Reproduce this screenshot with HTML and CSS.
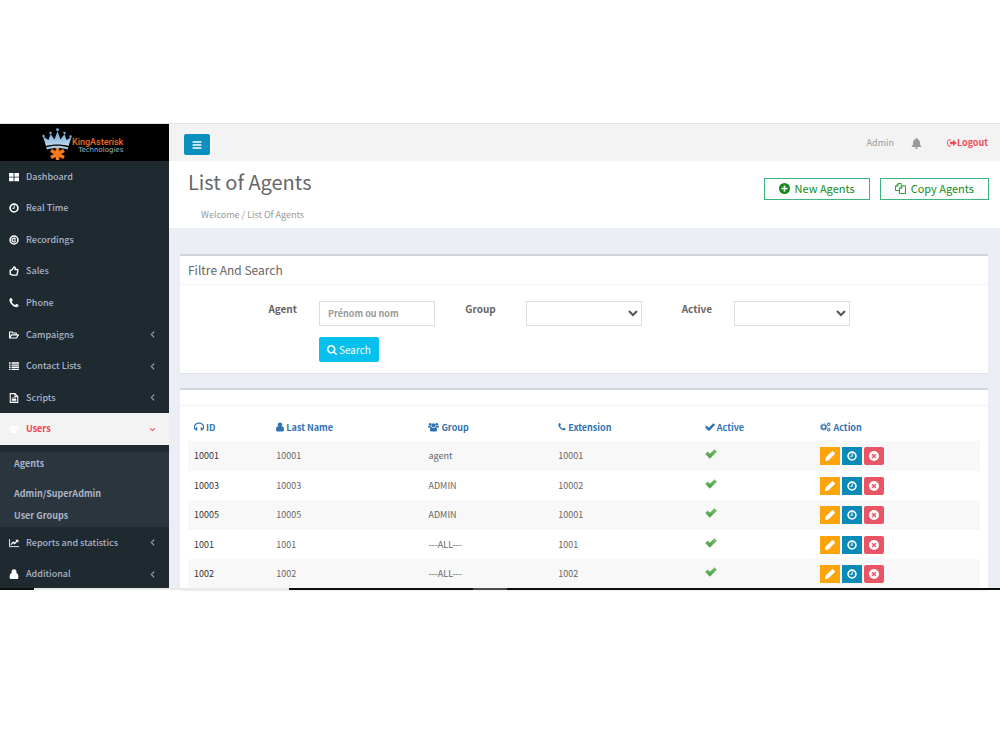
FILE: index.html
```html
<!DOCTYPE html>
<html lang="en">
<head>
  <meta charset="UTF-8" />
  <title>List of Agents</title>
  <link rel="stylesheet" href="styles.css">
</head>
<body>
  <!-- icon set -->
  <svg class="sprite" aria-hidden="true">
    <symbol id="i-grid" viewBox="0 0 16 16"><path d="M0 1.500h7.300v6H0zM8.700 1.500H16v6H8.700zM0 8.800h7.300v6H0zM8.700 8.800H16v6H8.700z"/></symbol>
    <symbol id="i-clock" viewBox="0 0 16 16"><circle cx="8" cy="8" r="6.300" fill="none" stroke="currentColor" stroke-width="2.600"/><path d="M8.300 4v4.500H5.500" fill="none" stroke="currentColor" stroke-width="1.600"/></symbol>
    <symbol id="i-record" viewBox="0 0 16 16"><circle cx="8" cy="8" r="6.300" fill="none" stroke="currentColor" stroke-width="2.400"/><path d="M10.500 6.300A3 3 0 1 0 10.500 9.700M7.500 8H11" fill="none" stroke="currentColor" stroke-width="1.900"/></symbol>
    <symbol id="i-thumb" viewBox="0 0 16 16"><path d="M2 6.500h2.500L8 1.300c2.200 0 2.400 2 1.500 4.200H14v3l-1.500 6H5.500L2 13z" fill="none" stroke="currentColor" stroke-width="2.200" stroke-linejoin="round"/></symbol>
    <symbol id="i-phone" viewBox="128 128 1536 1536"><path d="M1600 1240q0 27-10 70.500t-21 68.500q-21 50-122 106-94 51-186 51-27 0-53-3.500t-57.500-12.500-47-14.500-55.500-20.500-49-18q-98-35-175-83-127-79-264-216t-216-264q-48-77-83-175-3-9-18-49t-20.500-55.500-14.500-47-12.500-57.500-3.500-53q0-92 51-186 56-101 106-122 25-11 68.500-21t70.500-10q14 0 21 3 18 6 53 76 11 19 30 54t35 63.500 31 53.500q3 4 17.500 25t21.500 35.500 7 28.500q0 20-28.500 50t-62 55-62 53-28.500 46q0 9 5 22.500t8.500 20.500 14 24 11.500 19q76 137 174 235t235 174q2 1 19 11.500t24 14 20.500 8.500 22.500 5q18 0 46-28.500t53-62 55-62 50-28.500q14 0 28.500 7t35.500 21.500 25 17.500q25 15 53.500 31t63.500 35 54 30q70 35 76 53 3 7 3 21z"/></symbol>
    <symbol id="i-folder" viewBox="0 0 18 16"><path d="M1 13V2.500h4.500l1.500 2h6v3M1 13.500L4.500 7.800H17L13.500 13.500z" fill="none" stroke="currentColor" stroke-width="2" stroke-linejoin="round"/></symbol>
    <symbol id="i-list" viewBox="0 0 16 16"><path d="M0 2h2.500v2.200H0zM4 2h12v2.200H4zM0 5.400h2.500v2.200H0zM4 5.400h12v2.200H4zM0 8.800h2.500V11H0zM4 8.800h12V11H4zM0 12.200h2.500v2.200H0zM4 12.200h12v2.200H4z"/></symbol>
    <symbol id="i-file" viewBox="0 0 16 16"><path d="M2 1h7.500L14 5.500V15H2zM9.500 1v4.500H14" fill="none" stroke="currentColor" stroke-width="1.700"/><path d="M4.500 7.200h7v1.500h-7zM4.500 9.500h7V11h-7zM4.500 11.700h7v1.300h-7z"/></symbol>
    <symbol id="i-users" viewBox="0 0 20 16"><circle cx="4" cy="3" r="2.500"/><circle cx="16" cy="3" r="2.500"/><circle cx="10" cy="5" r="3.600"/><path d="M0 9c0-3 1-4 2.500-3.500 1 .8 2 .8 3 .3C5.500 7.500 6 8.500 7 9zM20 9c0-3-1-4-2.500-3.500-1 .8-2 .8-3 .3C14.500 7.500 14 8.500 13 9zM3.500 14c0-4 1-5.500 3.500-5.500 2 1.500 4 1.500 6 0 2.500 0 3.500 1.500 3.500 5.500 0 1.400-1 2-2 2h-9c-1 0-2-.6-2-2z"/></symbol>
    <symbol id="i-chart" viewBox="0 0 18 16"><path d="M1 1v13.500h17" fill="none" stroke="currentColor" stroke-width="1.600"/><path d="M3.500 11L7.500 6.500l2.500 2.500 5-5" fill="none" stroke="currentColor" stroke-width="2.400"/><path d="M11.500 2H17v5.500z"/></symbol>
    <symbol id="i-user" viewBox="0 0 14 16"><circle cx="7" cy="4.200" r="4"/><path d="M0 13c0-4 1-6 3-6.500h8c2 .5 3 2.500 3 6.500 0 2-1 3-2.500 3h-9C1 16 0 15 0 13z"/></symbol>
    <symbol id="i-left" viewBox="0 0 16 16"><path d="M11 3L6 8l5 5" fill="none" stroke="currentColor" stroke-width="1.800"/></symbol>
    <symbol id="i-down" viewBox="0 0 16 16"><path d="M4 6l4 4 4-4" fill="none" stroke="currentColor" stroke-width="1.800"/></symbol>
    <symbol id="i-bars" viewBox="0 0 16 16"><path d="M1 2h14v2.400H1zM1 6.800h14v2.400H1zM1 11.600h14V14H1z"/></symbol>
    <symbol id="i-bell" viewBox="0 0 16 16"><path d="M8 0c.8 0 1.200.5 1.100 1.300C12 2 13 4.300 13 7c0 3 .8 4.500 2.600 6H.4C2.200 11.500 3 10 3 7c0-2.700 1-5 3.900-5.700C6.800.5 7.200 0 8 0zM5.800 13.800h4.400c-.2 1.400-1.100 2.200-2.200 2.200s-2-.8-2.200-2.200z"/></symbol>
    <symbol id="i-logout" viewBox="0 0 18 16"><path d="M7 2.500H3.500C2 2.500 1 3.500 1 5v6c0 1.500 1 2.500 2.500 2.500H7" fill="none" stroke="currentColor" stroke-width="1.700"/><path d="M5.500 5.800H11V2l6.500 6L11 14v-3.800H5.500z"/></symbol>
    <symbol id="i-plus" viewBox="0 0 16 16"><path fill-rule="evenodd" d="M8 0a8 8 0 1 0 0 16A8 8 0 0 0 8 0zM6.800 3.500h2.400v3.300h3.300v2.400H9.200v3.300H6.800V9.200H3.500V6.800h3.300z"/></symbol>
    <symbol id="i-copy" viewBox="0 0 16 16"><path d="M6.500 11H.8V4.500L4.500.8H9V4M4.500.8v3.700H.8M6.500 7.500L10 4h5.200v11.200H6.500zM10 4v3.500H6.500" fill="none" stroke="currentColor" stroke-width="1.300"/></symbol>
    <symbol id="i-search" viewBox="64 128 1664 1664"><path d="M1216 832q0-185-131.500-316.500t-316.500-131.500-316.500 131.500-131.500 316.500 131.500 316.500 316.500 131.500 316.500-131.500 131.500-316.500zm512 832q0 52-38 90t-90 38q-54 0-90-38l-343-342q-179 124-399 124-143 0-273.500-55.500t-225-150-150-225-55.500-273.500 55.500-273.500 150-225 225-150 273.500-55.500 273.500 55.500 225 150 150 225 55.500 273.500q0 220-124 399l343 343q37 37 37 90z"/></symbol>
    <symbol id="i-headset" viewBox="0 0 16 16"><path d="M3.200 12.500C.5 10.500.2 7 1.800 4.700 4.500 1 11.500 1 14.200 4.700c1.600 2.300 1.300 5.800-1.400 7.800" fill="none" stroke="currentColor" stroke-width="2"/><path d="M3 8.500h2.300v5H3zM10.700 8.500H13v5h-2.300z"/></symbol>
    <symbol id="i-check" viewBox="100 200 1592 1400"><path d="M1671 566q0 40-28 68l-724 724-136 136q-28 28-68 28t-68-28l-136-136-362-362q-28-28-28-68t28-68l136-136q28-28 68-28t68 28l294 295 656-657q28-28 68-28t68 28l136 136q28 28 28 68z"/></symbol>
    <symbol id="i-cogs" viewBox="0 0 18 16"><circle cx="6" cy="8" r="3.500" fill="none" stroke="currentColor" stroke-width="2.400"/><circle cx="6" cy="8" r="5.300" fill="none" stroke="currentColor" stroke-width="1.400" stroke-dasharray="2.200 1.960"/><circle cx="14.300" cy="3.500" r="2.100" fill="none" stroke="currentColor" stroke-width="1.700"/><circle cx="14.300" cy="12.500" r="2.100" fill="none" stroke="currentColor" stroke-width="1.700"/></symbol>
    <symbol id="i-pencil" viewBox="0 0 16 16"><path d="M0 16l1-5.500L10.500 1c1-1 2.200-1 3.200 0L15 2.300c1 1 1 2.200 0 3.200L5.500 15z"/></symbol>
    <symbol id="i-remove" viewBox="0 0 16 16"><path fill-rule="evenodd" d="M8 0a8 8 0 1 0 0 16A8 8 0 0 0 8 0zM5.800 4.200L8 6.400l2.200-2.200 1.600 1.600L9.600 8l2.200 2.200-1.600 1.600L8 9.600l-2.200 2.200-1.600-1.600L6.400 8 4.200 5.800z"/></symbol>
    <symbol id="i-tick" viewBox="0 0 22 18"><defs><linearGradient id="tick" x1="0" y1="0" x2="0" y2="1"><stop offset="0" stop-color="#7cc668"/><stop offset="1" stop-color="#3c9a42"/></linearGradient></defs><path fill="url(#tick)" stroke="#4b9d4b" stroke-width="1" stroke-linejoin="round" d="M1 9l4-3.500 4 3.500L17.500 1 21 5 9 17z"/></symbol>
  </svg>

  <div class="app">
    <aside class="sidebar">
      <a class="brand" href="#">
        <svg class="brand-mark" viewBox="0 0 30 32" aria-hidden="true">
          <defs>
            <linearGradient id="crown" x1="0" y1="0" x2="0" y2="1"><stop offset="0" stop-color="#6ea3d0"/><stop offset="1" stop-color="#bcd8ee"/></linearGradient>
          </defs>
          <path fill="url(#crown)" d="M4 18L1 8.500 6.500 12 8.500 6l4 5.500L15.500 3l3 8.500 4-5.500L24.500 12l5-3L26.500 18c-6-2-16-2-22.500 0z"/>
          <g fill="#7fb0da"><circle cx="1.500" cy="8" r="1.200"/><circle cx="8.500" cy="5" r="1.200"/><circle cx="15.500" cy="1.700" r="1.400"/><circle cx="22.500" cy="5" r="1.200"/><circle cx="28.500" cy="8.500" r="1.200"/></g>
          <path fill="#a9cbe6" d="M4 19.500c6-2.500 16-2.500 22.500 0l-1 2c-6-2-14-2-20.500 0z"/>
          <path stroke="#f47b20" stroke-width="3.600" d="M15.500 20v12M9 22.500l13 7M22 22.500l-13 7"/>
        </svg>
        <span class="brand-text">
          <span class="brand-name">KingAsterisk</span>
          <span class="brand-sub">Technologies</span>
        </span>
      </a>
      <nav class="menu">
        <a class="item" href="#"><svg class="icon"><use href="#i-grid"/></svg>Dashboard</a>
        <a class="item" href="#"><svg class="icon"><use href="#i-clock"/></svg>Real Time</a>
        <a class="item" href="#"><svg class="icon"><use href="#i-record"/></svg>Recordings</a>
        <a class="item" href="#"><svg class="icon"><use href="#i-thumb"/></svg>Sales</a>
        <a class="item" href="#"><svg class="icon"><use href="#i-phone"/></svg>Phone</a>
        <a class="item" href="#"><svg class="icon"><use href="#i-folder"/></svg>Campaigns<svg class="arrow"><use href="#i-left"/></svg></a>
        <a class="item" href="#"><svg class="icon"><use href="#i-list"/></svg>Contact Lists<svg class="arrow"><use href="#i-left"/></svg></a>
        <a class="item" href="#"><svg class="icon"><use href="#i-file"/></svg>Scripts<svg class="arrow"><use href="#i-left"/></svg></a>
        <a class="item active" href="#"><svg class="icon"><use href="#i-users"/></svg>Users<svg class="arrow"><use href="#i-down"/></svg></a>
        <div class="submenu">
          <a href="#">Agents</a>
          <a href="#">Admin/SuperAdmin</a>
          <a href="#">User Groups</a>
        </div>
        <a class="item" href="#"><svg class="icon"><use href="#i-chart"/></svg>Reports and statistics<svg class="arrow"><use href="#i-left"/></svg></a>
        <a class="item" href="#"><svg class="icon"><use href="#i-user"/></svg>Additional<svg class="arrow"><use href="#i-left"/></svg></a>
      </nav>
    </aside>

    <div class="main">
      <header class="topbar">
        <button class="toggle" type="button" aria-label="Toggle menu"><svg class="icon"><use href="#i-bars"/></svg></button>
        <div class="top-links">
          <a class="who" href="#">Admin</a>
          <a class="bell" href="#" aria-label="Notifications"><svg class="icon"><use href="#i-bell"/></svg></a>
          <a class="logout" href="#"><svg class="icon"><use href="#i-logout"/></svg>Logout</a>
        </div>
      </header>

      <section class="page-head">
        <div>
          <h1>List of Agents</h1>
          <div class="crumbs"><a href="#">Welcome</a> / List Of Agents</div>
        </div>
        <div class="head-actions">
          <button class="btn-outline" type="button"><svg class="icon"><use href="#i-plus"/></svg>New Agents</button>
          <button class="btn-outline" type="button"><svg class="icon"><use href="#i-copy"/></svg>Copy Agents</button>
        </div>
      </section>

      <div class="content">
        <section class="box">
          <h2>Filtre And Search</h2>
          <form class="filters">
            <label for="agent">Agent</label>
            <input id="agent" type="text" placeholder="Prénom ou nom">
            <label class="mid" for="group">Group</label>
            <select id="group"><option></option></select>
            <label for="active">Active</label>
            <select id="active"><option></option></select>
            <button class="btn-search" type="button"><svg class="icon"><use href="#i-search"/></svg>Search</button>
          </form>
        </section>

        <section class="box list">
          <div class="box-bar"></div>
          <table>
            <colgroup><col class="c-id"><col class="c-name"><col class="c-group"><col class="c-ext"><col class="c-active"><col></colgroup>
            <thead>
              <tr>
                <th><svg class="icon"><use href="#i-headset"/></svg>ID</th>
                <th><svg class="icon slim"><use href="#i-user"/></svg>Last Name</th>
                <th><svg class="icon wide"><use href="#i-users"/></svg>Group</th>
                <th><svg class="icon slim"><use href="#i-phone"/></svg>Extension</th>
                <th><svg class="icon"><use href="#i-check"/></svg>Active</th>
                <th><svg class="icon wide"><use href="#i-cogs"/></svg>Action</th>
              </tr>
            </thead>
            <tbody>
              <tr>
                <td>10001</td><td>10001</td><td>agent</td><td>10001</td>
                <td><svg class="tick"><use href="#i-tick"/></svg></td>
                <td><div class="actions">
                  <button class="edit" type="button" aria-label="Edit"><svg class="icon"><use href="#i-pencil"/></svg></button>
                  <button class="time" type="button" aria-label="History"><svg class="icon"><use href="#i-clock"/></svg></button>
                  <button class="del" type="button" aria-label="Delete"><svg class="icon"><use href="#i-remove"/></svg></button>
                </div></td>
              </tr>
              <tr>
                <td>10003</td><td>10003</td><td>ADMIN</td><td>10002</td>
                <td><svg class="tick"><use href="#i-tick"/></svg></td>
                <td><div class="actions">
                  <button class="edit" type="button" aria-label="Edit"><svg class="icon"><use href="#i-pencil"/></svg></button>
                  <button class="time" type="button" aria-label="History"><svg class="icon"><use href="#i-clock"/></svg></button>
                  <button class="del" type="button" aria-label="Delete"><svg class="icon"><use href="#i-remove"/></svg></button>
                </div></td>
              </tr>
              <tr>
                <td>10005</td><td>10005</td><td>ADMIN</td><td>10001</td>
                <td><svg class="tick"><use href="#i-tick"/></svg></td>
                <td><div class="actions">
                  <button class="edit" type="button" aria-label="Edit"><svg class="icon"><use href="#i-pencil"/></svg></button>
                  <button class="time" type="button" aria-label="History"><svg class="icon"><use href="#i-clock"/></svg></button>
                  <button class="del" type="button" aria-label="Delete"><svg class="icon"><use href="#i-remove"/></svg></button>
                </div></td>
              </tr>
              <tr>
                <td>1001</td><td>1001</td><td>---ALL---</td><td>1001</td>
                <td><svg class="tick"><use href="#i-tick"/></svg></td>
                <td><div class="actions">
                  <button class="edit" type="button" aria-label="Edit"><svg class="icon"><use href="#i-pencil"/></svg></button>
                  <button class="time" type="button" aria-label="History"><svg class="icon"><use href="#i-clock"/></svg></button>
                  <button class="del" type="button" aria-label="Delete"><svg class="icon"><use href="#i-remove"/></svg></button>
                </div></td>
              </tr>
              <tr>
                <td>1002</td><td>1002</td><td>---ALL---</td><td>1002</td>
                <td><svg class="tick"><use href="#i-tick"/></svg></td>
                <td><div class="actions">
                  <button class="edit" type="button" aria-label="Edit"><svg class="icon"><use href="#i-pencil"/></svg></button>
                  <button class="time" type="button" aria-label="History"><svg class="icon"><use href="#i-clock"/></svg></button>
                  <button class="del" type="button" aria-label="Delete"><svg class="icon"><use href="#i-remove"/></svg></button>
                </div></td>
              </tr>
            </tbody>
          </table>
        </section>
      </div>
    </div>
    <div class="dock"><span class="dock-light"></span><span class="dock-gray"></span></div>
  </div>
</body>
</html>
```
FILE: styles.css
```css
* {
  box-sizing: border-box;
}
body {
  margin: 0;
  padding: 123px 0;
  background: #fff;
  color: #666;
  font-family: "Noto Sans CJK SC", "Open Sans", sans-serif;
  font-size: 9px;
  line-height: 14px;
}
a {
  color: inherit;
  text-decoration: none;
}
button, input, select {
  font: inherit;
}
button {
  display: inline-flex;
  align-items: center;
  justify-content: center;
  padding: 0;
  border: none;
  cursor: pointer;
}
.sprite {
  position: absolute;
  width: 0;
  height: 0;
}
.icon {
  width: 10px;
  height: 10px;
  flex: none;
  fill: currentColor;
}
.app {
  position: relative;
  display: flex;
  border-top: 1px solid #e2e2e2;
}

/* sidebar */
.sidebar {
  display: flex;
  flex-direction: column;
  width: 169px;
  flex: none;
  background: #1f2930;
  color: #a9b4c8;
  font-weight: bold;
}
.brand {
  display: flex;
  align-items: center;
  height: 37px;
  padding: 2px 0 0 42px;
  background: #000;
}
.brand-mark {
  width: 30px;
  height: 32px;
}
.brand-text {
  display: flex;
  flex-direction: column;
  align-items: flex-end;
  padding-top: 5px;
}
.brand-name {
  color: #ee6c1c;
  font: 500 9px/9px Roboto, Arial, sans-serif;
}
.brand-sub {
  color: #92b8d8;
  font: 7px/7px "DejaVu Sans", sans-serif;
}
.menu {
  display: flex;
  flex-direction: column;
  flex: 1;
}
.item {
  display: flex;
  align-items: center;
  flex: 1;
  gap: 7px;
  padding: 0 12px 0 9px;
  font-weight: 500;
}
.item .icon {
  color: #fff;
}
.arrow {
  width: 9px;
  height: 9px;
  margin-left: auto;
}
.item.active {
  background: #f3f3f3;
  color: #f0424f;
  font-weight: bold;
}
.submenu {
  display: flex;
  flex-direction: column;
  margin-top: 7px;
  padding: 1px 14px 0;
  background: #2b353d;
  line-height: 22px;
}
.submenu a:first-child {
  margin-bottom: 8px;
}

/* top bar */
.main {
  flex: 1;
  min-width: 0;
  background: #ebeef4;
}
.topbar {
  display: flex;
  justify-content: space-between;
  align-items: center;
  height: 37px;
  padding: 4px 12px 0 15px;
  background: #f3f3f3;
}
.toggle {
  width: 26px;
  height: 21px;
  border-radius: 2px;
  background: #0a8fbf;
  color: #fff;
}
.top-links {
  display: flex;
  align-items: center;
  padding-bottom: 3px;
  color: #999;
}
.bell {
  display: flex;
  margin: 0 25px 0 17px;
}
.bell .icon {
  width: 11px;
  height: 11px;
}
.logout {
  display: flex;
  align-items: center;
  color: #ee4b59;
  font-weight: bold;
}

/* page heading */
.page-head {
  display: flex;
  justify-content: space-between;
  padding: 8px 11px 6px 19px;
  background: #fff;
}
h1 {
  margin: 0;
  font-size: 20px;
  line-height: 26px;
  font-weight: normal;
}
.crumbs {
  margin: 13px 0 0 13px;
  color: #999;
}
.head-actions {
  display: flex;
  align-items: flex-start;
  gap: 10px;
  padding-top: 9px;
}
.btn-outline {
  height: 22px;
  padding: 0 14px 2px;
  gap: 5px;
  border: 1px solid #3cb67e;
  background: #fff;
  color: #138a1c;
  font-size: 11px;
}
.btn-outline .icon {
  width: 11px;
  height: 11px;
}

/* boxes */
.content {
  padding: 26px 12px 0 11px;
}
.box {
  margin-bottom: 15px;
  border-top: 2px solid #d0d4dc;
  background: #fff;
  box-shadow: 0 1px 1px rgba(0,0,0,0.06);
}
.box.list {
  margin-bottom: 0;
  padding-bottom: 1px;
}
h2 {
  margin: 0;
  padding: 0 8px;
  border-bottom: 1px solid #f2f2f2;
  font-size: 12px;
  line-height: 28px;
  font-weight: normal;
}
.filters {
  display: grid;
  grid-template-columns: 139fr 116fr 91fr 116fr 92fr 116fr 138fr;
  row-gap: 11px;
  padding: 16px 0 11px;
}
.filters label {
  padding: 1px 22px 0 0;
  text-align: right;
  font-weight: bold;
  font-size: 10px;
}
.filters .mid {
  padding-right: 0;
  text-align: center;
}
.filters input, .filters select {
  width: 100%;
  height: 25px;
  padding: 0 8px;
  border: 1px solid #dcdde0;
  border-radius: 0;
  background: #fff;
  color: #555;
  font-weight: bold;
}
.filters select {
  padding: 0;
}
.filters input::placeholder {
  color: #999;
}
.btn-search {
  grid-column: 2;
  justify-self: start;
  width: 60px;
  height: 25px;
  gap: 2px;
  border-radius: 2px;
  background: #08c0ee;
  color: #fff;
  font-size: 10px;
}

/* agents table */
.box-bar {
  height: 16px;
  border-bottom: 1px solid #f2f2f2;
}
table {
  width: calc(100% - 16px);
  margin: 7px 8px 0;
  border-collapse: collapse;
  table-layout: fixed;
}
.c-id { width: 10.4%; }
.c-name { width: 19.2%; }
.c-group { width: 16.4%; }
.c-ext { width: 18.5%; }
.c-active { width: 14.6%; }
th, td {
  padding: 0 6px;
  text-align: left;
}
th {
  height: 28px;
  padding-top: 2px;
  color: #3173b2;
}
th .icon {
  margin-right: 2px;
  vertical-align: -1px;
}
.icon.slim {
  width: 8px;
}
.icon.wide {
  width: 11px;
}
td {
  height: 30px;
}
tbody tr:nth-child(even) td {
  height: 29px;
}
td:first-child {
  color: #333;
}
tbody tr:nth-child(odd) {
  background: #f8f8f8;
}
.tick {
  display: block;
  width: 12px;
  height: 10px;
  margin-bottom: 4px;
}
.actions {
  display: flex;
  gap: 2px;
}
.actions button {
  width: 20px;
  height: 18px;
  color: #fff;
}
.actions .edit { background: #fca40a; }
.actions .time { background: #0a8ab8; }
.actions .del { background: #e95565; border-radius: 2px; }

/* dock edge lies over the bottom of the app */
.dock {
  position: absolute;
  left: 0;
  right: 0;
  bottom: 0;
  display: flex;
  height: 2px;
  padding-left: 34px;
  background: #0b0f10;
}
.dock-light {
  width: 255px;
  background: #e9e9e9;
}
.dock-gray {
  width: 34px;
  margin-left: 184px;
  background: #4a4d52;
}
```
